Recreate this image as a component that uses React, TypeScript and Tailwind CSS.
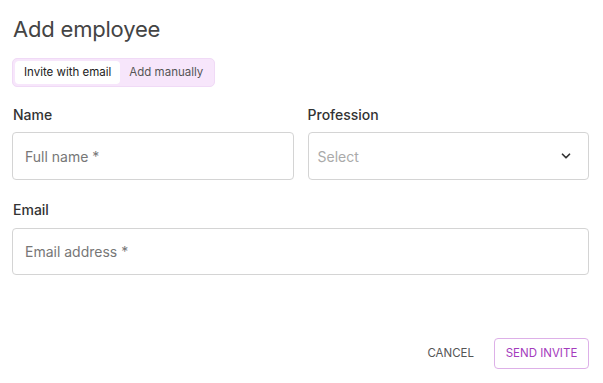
function ChevronDown() {
  return (
    <svg width="14" height="14" viewBox="0 0 24 24" fill="none" stroke="#333" strokeWidth="3" strokeLinecap="round" strokeLinejoin="round">
      <path d="M6 9l6 6 6-6" />
    </svg>
  );
}

export default function App() {
  return (
    <div className="w-[603px] h-[383px] bg-white px-[12px] pr-[14px] pt-[14px] flex flex-col font-[Inter,'Noto_Sans',sans-serif]">
      <h1 className="text-[22px] leading-[30px] text-[#444] tracking-[-0.2px] pl-[1px]">Add employee</h1>

      <div className="mt-[14px] flex">
        <div className="flex p-[2px] bg-[#f7e6fb] border border-[#f0daf6] rounded-[5px] text-[11.5px] text-[#333]">
          <div className="h-[23px] px-[9px] bg-white rounded-[4px] flex items-center text-[#222]">Invite with email</div>
          <div className="h-[23px] px-[9px] flex items-center text-[#555]">Add manually</div>
        </div>
      </div>

      <div className="mt-[18px] grid grid-cols-2 gap-[14px]">
        <div className="flex flex-col">
          <label className="text-[14px] leading-[20px] font-medium text-[#333] pl-[1px]">Name</label>
          <div className="mt-[7px] h-[48px] border border-[#d4d4d4] rounded-[4px] flex items-center px-[12px] text-[14px] text-[#777]">
            Full name *
          </div>
        </div>
        <div className="flex flex-col">
          <label className="text-[14px] leading-[20px] font-medium text-[#333]">Profession</label>
          <div className="mt-[7px] h-[48px] border border-[#d4d4d4] rounded-[4px] flex items-center justify-between pl-[9px] pr-[15px] text-[14px] text-[#aaa]">
            <span>Select</span>
            <ChevronDown />
          </div>
        </div>
      </div>

      <div className="mt-[20px] flex flex-col">
        <label className="text-[14px] leading-[20px] font-medium text-[#333] pl-[1px]">Email</label>
        <div className="mt-[8px] h-[47px] border border-[#d4d4d4] rounded-[4px] flex items-center px-[12px] text-[14px] text-[#777]">
          Email address *
        </div>
      </div>

      <div className="mt-[63px] flex justify-end items-center gap-[20px]">
        <button className="text-[11.5px] text-[#555]">CANCEL</button>
        <button className="h-[31px] w-[95px] border border-[#ddb0e8] rounded-[4px] text-[11.5px] text-[#a43bbd]">SEND INVITE</button>
      </div>
    </div>
  );
}
